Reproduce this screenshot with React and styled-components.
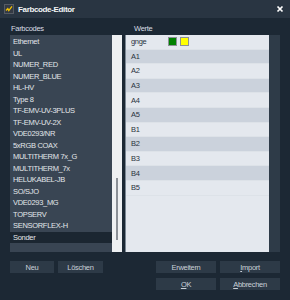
import React from 'react';
import styled, { createGlobalStyle } from 'styled-components';

const codes = [
  'Ethernet', 'UL', 'NUMER_RED', 'NUMER_BLUE', 'HL-HV', 'Type 8',
  'TF-EMV-UV-3PLUS', 'TF-EMV-UV-2X', 'VDE0293/NR', '5xRGB COAX',
  'MULTITHERM 7x_G', 'MULTITHERM_7x', 'HELUKABEL-JB', 'SO/SJO',
  'VDE0293_MG', 'TOPSERV', 'SENSORFLEX-H', 'Sonder',
];

const values = ['A1', 'A2', 'A3', 'A4', 'A5', 'B1', 'B2', 'B3', 'B4', 'B5'];

export default function App() {
  return (
    <>
      <Global />
      <Dialog>
        <TitleBar>
          <AppIcon viewBox="0 0 10 10">
            <rect x="0.5" y="0.5" width="9" height="9" fill="#343a44" stroke="#555b64" />
            <path d="M2 6.5 L3.8 4.6 L4.8 6.6 L8 2.4" fill="none" stroke="#f2c200" strokeWidth="1.3" />
          </AppIcon>
          <Title>Farbcode-Editor</Title>
          <Close viewBox="0 0 8 8">
            <path d="M1.5 1.5 L6.5 6.5 M6.5 1.5 L1.5 6.5" stroke="#fff" strokeWidth="1.7" />
          </Close>
        </TitleBar>
        <Body>
          <Label>Farbcodes</Label>
          <Label $indent={8}>Werte</Label>
          <LeftPanel>
            <CodeList>
              {codes.map(c => (
                <CodeItem key={c} $selected={c === 'Sonder'}>{c}</CodeItem>
              ))}
            </CodeList>
            <Track>
              <Thumb />
            </Track>
          </LeftPanel>
          <RightPanel>
            <ValueList>
              <ValueRow>
                <span>gnge</span>
                <Swatches>
                  <Swatch $color="#008000" />
                  <Swatch $color="#ffff00" />
                </Swatches>
              </ValueRow>
              {values.map((v, i) => (
                <ValueRow key={v} $striped={i % 2 === 0}>{v}</ValueRow>
              ))}
            </ValueList>
            <DarkTrack />
          </RightPanel>
        </Body>
        <Footer>
          <ButtonGroup>
            <Button $w={44}>Neu</Button>
            <Button $w={45}>Löschen</Button>
          </ButtonGroup>
          <ButtonGrid>
            <Button>Erweitern</Button>
            <Button><u>I</u>mport</Button>
            <Button><u>O</u>K</Button>
            <Button><u>A</u>bbrechen</Button>
          </ButtonGrid>
        </Footer>
      </Dialog>
    </>
  );
}

const Global = createGlobalStyle`
  html, body {
    margin: 0;
    padding: 0;
    background: #1c2834;
  }
  * { box-sizing: border-box; }
`;

const Dialog = styled.div`
  width: 290px;
  height: 300px;
  background: #1c2834;
  font-family: "Liberation Sans", Arial, sans-serif;
  font-size: 7.5px;
  letter-spacing: -0.3px;
  color: #d4dae0;
  display: flex;
  flex-direction: column;
  overflow: hidden;
`;

const TitleBar = styled.div`
  height: 18px;
  background: #293542;
  display: flex;
  align-items: center;
  padding: 0 6px 0 4px;
`;

const AppIcon = styled.svg`
  width: 10px;
  height: 10px;
  flex-shrink: 0;
`;

const Title = styled.div`
  flex: 1;
  margin-left: 4px;
  font-weight: bold;
  font-size: 8px;
  letter-spacing: -0.35px;
  color: #f2f4f6;
`;

const Close = styled.svg`
  width: 8px;
  height: 8px;
`;

const Body = styled.div`
  display: grid;
  grid-template-columns: 112px 155px;
  grid-template-rows: 17px 217px;
  column-gap: 3px;
  padding: 0 10px;
`;

const Label = styled.div`
  display: flex;
  align-items: center;
  padding: 3px 0 0 ${p => 1 + (p.$indent || 0)}px;
  color: #d8dee4;
`;

const LeftPanel = styled.div`
  display: flex;
`;

const CodeList = styled.div`
  flex: 1;
  background: #394553;
  padding-top: 1px;
`;

const CodeItem = styled.div`
  height: 11.5px;
  line-height: 11.5px;
  padding-left: 3px;
  white-space: nowrap;
  color: #e2e6ea;
  background: ${p => (p.$selected ? '#1b2631' : 'transparent')};
`;

const Track = styled.div`
  width: 10px;
  background: #eef0f2;
  display: flex;
  flex-direction: column;
  align-items: center;
`;

const Thumb = styled.div`
  width: 2px;
  height: 62px;
  margin-top: auto;
  margin-bottom: 12px;
  background: #8a8f96;
`;

const RightPanel = styled.div`
  display: flex;
`;

const ValueList = styled.div`
  flex: 1;
  background: #e4e8ee;
  border-left: 1px solid #7c8894;
`;

const ValueRow = styled.div`
  height: 14.6px;
  display: flex;
  align-items: center;
  padding-left: 5px;
  color: #2a323c;
  background: ${p => (p.$striped ? '#cbd2dc' : 'transparent')};
  border-bottom: 0.5px solid #dde2e8;
`;

const Swatches = styled.div`
  display: flex;
  gap: 3px;
  margin-left: 21px;
`;

const Swatch = styled.div`
  width: 9px;
  height: 9px;
  background: ${p => p.$color};
  border: 1px solid #8c9096;
`;

const DarkTrack = styled.div`
  width: 11px;
  background: #2e3b48;
`;

const Footer = styled.div`
  display: flex;
  justify-content: space-between;
  padding: 9px 10px 0;
`;

const ButtonGroup = styled.div`
  display: flex;
  gap: 4px;
  align-self: flex-start;
`;

const ButtonGrid = styled.div`
  display: grid;
  grid-template-columns: 60px 60px;
  column-gap: 4px;
  row-gap: 5px;
`;

const Button = styled.div`
  width: ${p => (p.$w ? `${p.$w}px` : 'auto')};
  height: 12px;
  background: #2d3a47;
  color: #c9d0d8;
  display: flex;
  align-items: center;
  justify-content: center;
  u { text-decoration-thickness: 1px; }
`;
